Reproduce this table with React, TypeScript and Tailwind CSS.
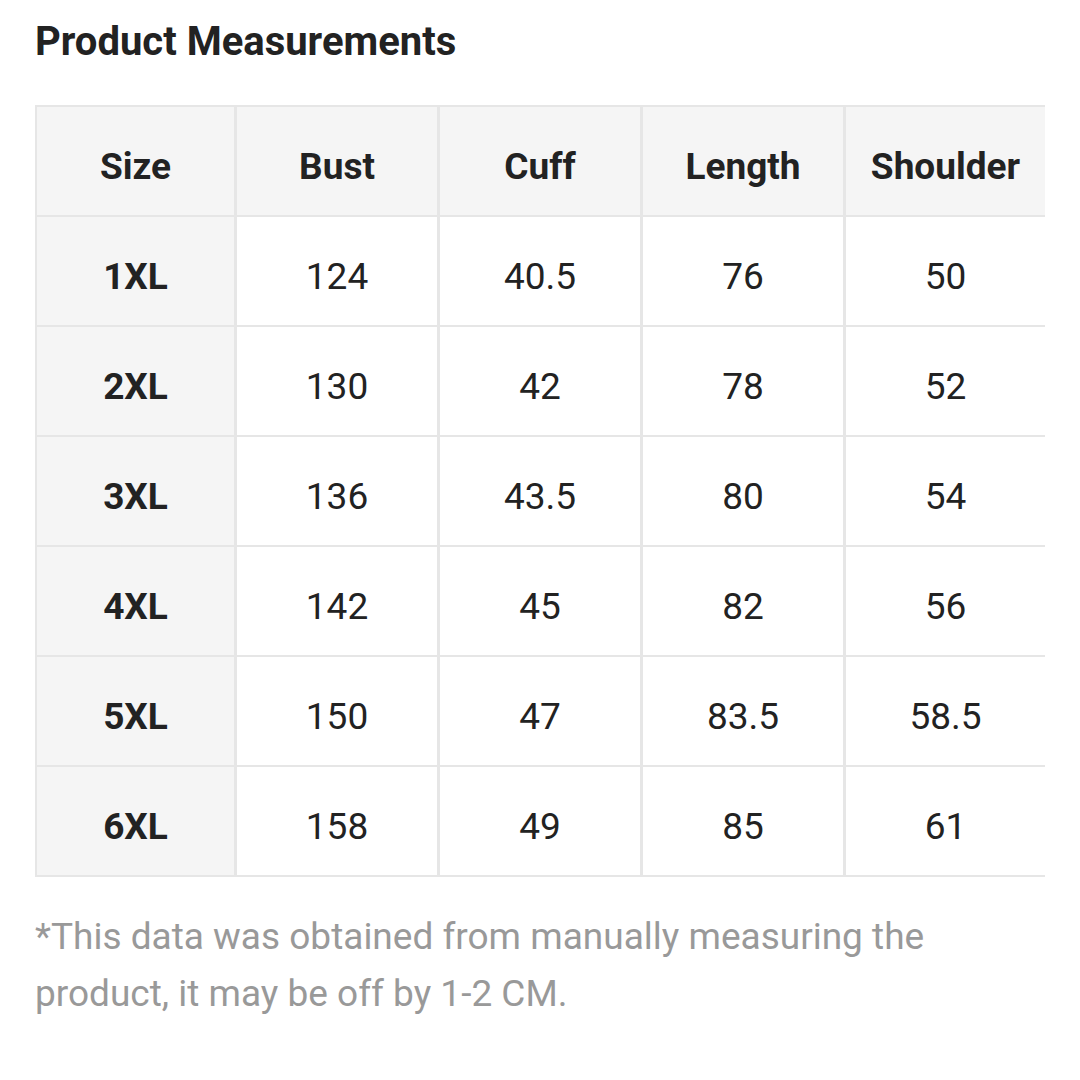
import React from 'react'

const headers = ['Size', 'Bust', 'Cuff', 'Length', 'Shoulder']

const rows = [
  ['1XL', '124', '40.5', '76', '50'],
  ['2XL', '130', '42', '78', '52'],
  ['3XL', '136', '43.5', '80', '54'],
  ['4XL', '142', '45', '82', '56'],
  ['5XL', '150', '47', '83.5', '58.5'],
  ['6XL', '158', '49', '85', '61'],
]

const App: React.FC = () => (
  <div
    className="w-[1080px] h-[1080px] bg-white text-[#222] pl-[35px] pt-[19px]"
    style={{ fontFamily: 'Roboto, "Noto Sans", sans-serif' }}
  >
    <h1 className="text-[40px] font-bold leading-[46px]">
      Product Measurements
    </h1>

    <div className="mt-[40px] w-[1010px] grid grid-cols-[197px_200px_200px_200px_199px] gap-x-[3px] gap-y-[2px] bg-[#e6e6e6] pl-[2px] py-[2px]">
      {headers.map((h) => (
        <div
          key={h}
          className="h-[108px] flex items-center justify-center bg-[#f5f5f5] text-[37px] font-bold pt-[12px]"
        >
          {h}
        </div>
      ))}
      {rows.map((row) =>
        row.map((cell, i) => (
          <div
            key={row[0] + i}
            className={
              i === 0
                ? 'h-[108px] flex items-center justify-center bg-[#f5f5f5] text-[37px] font-bold pt-[12px]'
                : 'h-[108px] flex items-center justify-center bg-white text-[37px] pt-[12px]'
            }
          >
            {cell}
          </div>
        ))
      )}
    </div>

    <p className="mt-[31px] w-[960px] text-[37px] leading-[57px] text-[#999]">
      *This data was obtained from manually measuring the product, it may be off by 1-2 CM.
    </p>
  </div>
)

export default App
